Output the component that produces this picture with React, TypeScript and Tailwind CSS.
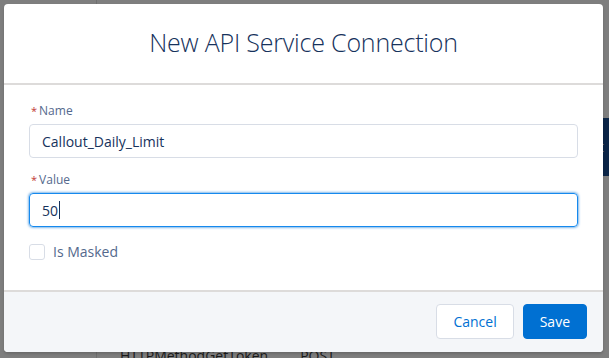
const font = "font-['Open_Sans','Liberation_Sans',sans-serif]"

const Label = ({ text }: { text: string }) => (
  <div className="flex items-center text-[12px] leading-[18px] text-[#54698d] mb-[4px] pl-[2px]">
    <abbr className="no-underline text-[#c23934] text-[11px] mr-[2px]" title="required">
      *
    </abbr>
    {text}
  </div>
)

const App = () => {
  return (
    <div className={`relative w-[609px] h-[358px] overflow-hidden bg-[#7e7e7e] ${font}`}>
      {/* dimmed page behind the modal */}
      <div className="absolute left-[96px] top-0 w-px h-full bg-[#6f6f6f]" />
      <div className="absolute left-[597px] top-[118px] w-[20px] h-[58px] bg-[#0b2547] text-[#6d7b8c] text-[14px] leading-[58px] pl-[2px]">
        t
      </div>
      <div className="absolute left-[120px] top-[345px] flex gap-[32px] text-[14px] text-[#1a1a1a]">
        <span>HTTPMethodGetToken</span>
        <span>POST</span>
      </div>

      {/* modal */}
      <div className="absolute left-[4px] top-[4px] w-[599px] h-[348px] bg-white rounded-[4px] flex flex-col overflow-hidden shadow-[0_2px_3px_rgba(0,0,0,0.16)]">
        <header className="h-[81px] shrink-0 flex items-center justify-center border-b-2 border-[#dddbda]">
          <h2 className="text-[25px] font-light text-[#16325c] leading-tight tracking-[-0.2px] -mt-[2px]">
            New API Service Connection
          </h2>
        </header>

        <div className="flex-1 px-[25px] pt-[17px]">
          <Label text="Name" />
          <div className="h-[34px] border border-[#d8dde6] rounded-[4px] flex items-center px-[12px] text-[14px] text-[#16325c]">
            Callout_Daily_Limit
          </div>

          <div className="mt-[13px]">
            <Label text="Value" />
          </div>
          <div className="h-[34px] border border-[#1589ee] rounded-[4px] flex items-center px-[12px] text-[14px] text-[#16325c] shadow-[0_0_3px_#0070d2]">
            50
            <span className="inline-block w-px h-[18px] bg-[#16325c] ml-px" />
          </div>

          <label className="mt-[15px] flex items-center gap-[8px] text-[14px] text-[#54698d]">
            <span className="w-[16px] h-[16px] border border-[#d8dde6] rounded-[3px] bg-white" />
            <span className="-mt-px">Is Masked</span>
          </label>
        </div>

        <footer className="h-[62px] shrink-0 bg-[#f4f6f9] border-t-2 border-[#dddbda] flex items-center justify-end gap-[9px] pr-[16px] pb-[1px]">
          <button className="h-[35px] px-[16px] rounded-[4px] border border-[#d8dde6] bg-white text-[#0070d2] text-[14px]">
            Cancel
          </button>
          <button className="h-[35px] px-[16px] rounded-[4px] border border-[#0070d2] bg-[#0070d2] text-white text-[14px]">
            Save
          </button>
        </footer>
      </div>
    </div>
  )
}

export default App
